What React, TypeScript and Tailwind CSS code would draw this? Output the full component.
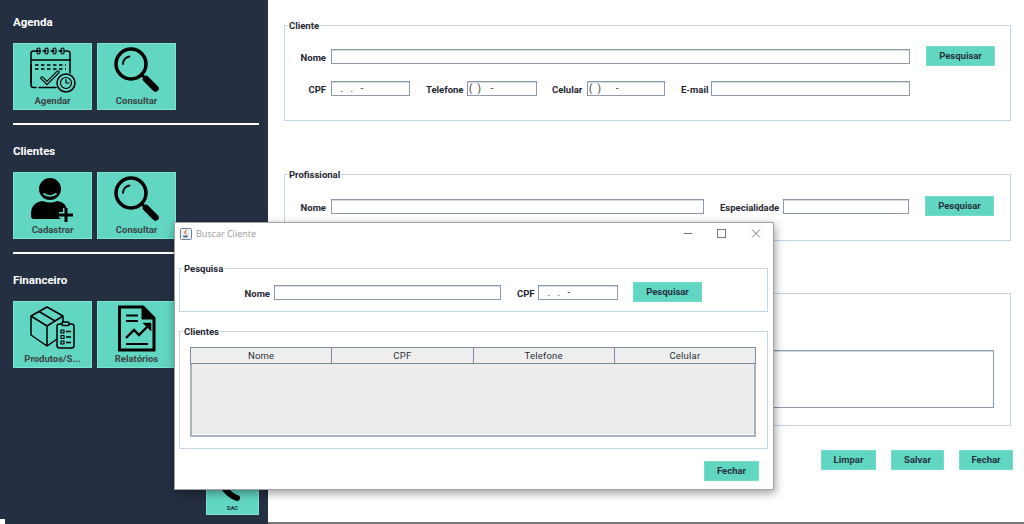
import type { ReactNode } from 'react';

const FONT = "font-['Roboto',Arial,sans-serif]";

function CalendarIcon() {
  return (
    <svg width="46" height="46" viewBox="0 0 46 46" fill="none" stroke="#000" strokeLinecap="round">
      <path d="M10 4H3.5Q1 4 1 6.5V38Q1 40.500 3.500 40.500H6M1 13H40V6.500Q40 4 37.500 4H35" strokeWidth="1.500" />
      <path d="M1 18V36M9 40.500H26M40 13V26" strokeWidth="1.500" />
      <path d="M13 4H16M21 4H24M29 4H32" strokeWidth="1.500" />
      <rect x="7" y="1" width="3" height="6" rx="1.500" strokeWidth="1.200" />
      <rect x="15" y="1" width="3" height="6" rx="1.500" strokeWidth="1.200" />
      <rect x="23" y="1" width="3" height="6" rx="1.500" strokeWidth="1.200" />
      <rect x="31" y="1" width="3" height="6" rx="1.500" strokeWidth="1.200" />
      <path d="M5 18H36M5 22H36" strokeWidth="1.500" strokeDasharray="3.500 2.500" strokeLinecap="butt" />
      <path d="M12 31L17 36L28 25" strokeWidth="3.500" />
      <path d="M12 31L17 36L28 25" strokeWidth="1.200" stroke="#61d6c2" />
      <circle cx="36" cy="36" r="9" fill="#61d6c2" strokeWidth="1.500" />
      <circle cx="36" cy="36" r="5.500" strokeWidth="1.200" />
      <path d="M36 32.500V36H39" strokeWidth="1.200" />
    </svg>
  );
}

function SearchIcon() {
  return (
    <svg width="46" height="46" viewBox="0 0 46 46" fill="none" stroke="#000" strokeLinecap="round">
      <circle cx="17" cy="17" r="15" strokeWidth="3.500" />
      <path d="M9 17Q9.500 10.500 15.500 9.500" strokeWidth="1.800" />
      <path d="M27.500 27.500L31 31" strokeWidth="3" />
      <path d="M32 32L41.500 41.500" strokeWidth="6.500" />
    </svg>
  );
}

function UserPlusIcon() {
  return (
    <svg width="46" height="46" viewBox="0 0 46 46" fill="none">
      <circle cx="20" cy="13" r="11" fill="#000" />
      <path d="M13.500 17.500Q20 22.500 26.500 17.500" stroke="#61d6c2" strokeWidth="1.600" />
      <path d="M1 38C1 30 5 26 13 25Q20 28 27 25C33 26 36 28 37 34L30 43H4Q1 43 1 40Z" fill="#000" />
      <path d="M36 32V46M29 39H43" stroke="#61d6c2" strokeWidth="6" />
      <path d="M36 32V46M29 39H43" stroke="#000" strokeWidth="3" />
    </svg>
  );
}

function BoxIcon() {
  return (
    <svg width="46" height="46" viewBox="0 0 46 46" fill="none" stroke="#000" strokeWidth="1.500" strokeLinejoin="round">
      <path d="M1 11L17 2L33 11V30L17 41L1 30ZM1 11L17 21L33 11M17 21V41M9 6.500L25 16" />
      <rect x="27" y="19" width="17" height="24" rx="2.500" fill="#61d6c2" />
      <rect x="32" y="17" width="7" height="3.500" rx="1" fill="#61d6c2" />
      <path d="M31 25H34V28H31ZM31 30.500H34V33.500H31ZM31 36H34V39H31Z" strokeWidth="1.200" />
      <path d="M36 26.500H41M36 32H41M36 37.500H41" />
    </svg>
  );
}

function ReportIcon() {
  return (
    <svg width="40" height="47" viewBox="0 0 40 47" fill="none" stroke="#000">
      <path d="M2.500 2H26L37 13V45H2.500Z" strokeWidth="3" />
      <path d="M25 2V14H37Z" fill="#000" strokeWidth="1" />
      <path d="M9 10.500H21M9 16H21" strokeWidth="2.200" />
      <path d="M9 33L17 25L22 30L31 21" strokeWidth="2.400" />
      <path d="M26 18H34V26Z" fill="#000" strokeWidth="0.500" />
      <path d="M9 39H31" strokeWidth="2" />
    </svg>
  );
}

function PhoneIcon() {
  return (
    <svg width="40" height="40" viewBox="0 0 40 40" fill="none" stroke="#000" strokeLinecap="round">
      <path d="M4 5C4 18 13 31 24 35" strokeWidth="6" />
    </svg>
  );
}

function JavaIcon() {
  return (
    <svg width="12" height="12" viewBox="0 0 12 12" fill="none">
      <rect x="0.500" y="0.500" width="11" height="11" rx="1" fill="#eef2f7" stroke="#6f8096" />
      <path d="M6.500 2L4.500 4.500L6.500 6" stroke="#d9772f" strokeWidth="1.200" />
      <path d="M3 7.500H8L7.500 9.500H3.500Z" fill="#50678a" />
    </svg>
  );
}

function MenuButton({ label, icon, wide }: { label: string; icon: ReactNode; wide?: boolean }) {
  return (
    <button className={`flex h-[67px] w-[79px] flex-col items-center border border-[#7fe3d2] bg-[#61d6c2] pt-[2px] text-[9.500px] font-bold text-[#3a4545] ${wide ? 'ml-[5px]' : ''}`}>
      <span className="flex h-[48px] items-center justify-center">{icon}</span>
      <span className="mt-[1px] leading-[12px]">{label}</span>
    </button>
  );
}

function MenuSection({ title, children, divider }: { title: string; children: ReactNode; divider?: boolean }) {
  return (
    <section>
      <h2 className="text-[11.500px] font-bold leading-[13px] text-white">{title}</h2>
      <div className="mt-[14px] flex">{children}</div>
      {divider && <div className="mb-[20px] mt-[13px] h-[2px] bg-white" />}
    </section>
  );
}

function Sidebar() {
  return (
    <aside className="relative flex h-full w-[268px] shrink-0 flex-col bg-[#242f42] pb-[9px] pl-[13px] pr-[9px] pt-[16px]">
      <MenuSection title="Agenda" divider>
        <MenuButton label="Agendar" icon={<CalendarIcon />} />
        <MenuButton label="Consultar" icon={<SearchIcon />} wide />
      </MenuSection>
      <MenuSection title="Clientes" divider>
        <MenuButton label="Cadastrar" icon={<UserPlusIcon />} />
        <MenuButton label="Consultar" icon={<SearchIcon />} wide />
      </MenuSection>
      <MenuSection title="Financeiro">
        <MenuButton label="Produtos/S..." icon={<BoxIcon />} />
        <MenuButton label="Relatórios" icon={<ReportIcon />} wide />
      </MenuSection>
      <button className="ml-auto mt-auto flex h-[60px] w-[53px] flex-col items-center border border-[#7fe3d2] bg-[#61d6c2] pt-[7px] text-[6px] font-bold leading-[8px] text-[#26323f]">
        <PhoneIcon />
        <span className="mt-[1px]">SAC</span>
      </button>
      <div className="absolute bottom-0 left-0 h-[5px] w-[5px] bg-white" />
    </aside>
  );
}

function Field({ width, value = '' }: { width: string; value?: string }) {
  return (
    <input
      readOnly
      value={value}
      className={`${width} h-[15px] shrink-0 border border-[#8c9aaa] bg-white px-[1px] text-[10px] leading-[13px] text-[#444] shadow-[inset_0_1px_0_#d5dbe2] outline-none`}
    />
  );
}

function Label({ children, className = '' }: { children: ReactNode; className?: string }) {
  return <label className={`shrink-0 whitespace-nowrap pt-[2px] text-[9.500px] font-bold leading-[13px] text-[#1f2733] ${className}`}>{children}</label>;
}

function ActionButton({ children, className = '' }: { children: ReactNode; className?: string }) {
  return (
    <button className={`h-[20px] shrink-0 border border-[#74dcc9] bg-[#61d6c2] text-[9.500px] font-bold text-[#26323f] ${className}`}>
      {children}
    </button>
  );
}

function Group({ title, className = '', children }: { title?: string; className?: string; children?: ReactNode }) {
  return (
    <fieldset className={`border border-[#c3d5e6] ${className}`}>
      {title && (
        <legend className="ml-[3px] px-[1px] text-[9.500px] font-bold leading-[13px] text-[#1f2733]">{title}</legend>
      )}
      {children}
    </fieldset>
  );
}

function Form() {
  return (
    <main className="flex h-full flex-1 flex-col border-b-2 border-[#777] pl-[16px] pr-[11px] pt-[19px]">
      <Group title="Cliente" className="mr-[2px] h-[102px]">
        <div className="mt-[14px] flex h-[20px] items-center">
          <Label className="w-[41px] text-right">Nome</Label>
          <span className="w-[5px]" />
          <Field width="w-[579px]" />
          <ActionButton className="ml-[16px] w-[69px]">Pesquisar</ActionButton>
        </div>
        <div className="mt-[15px] flex h-[15px] items-center">
          <Label className="w-[41px] text-right">CPF</Label>
          <span className="w-[5px]" />
          <Field width="w-[79px]" value="   .   .   -" />
          <Label className="ml-[16px] w-[37px]">Telefone</Label>
          <span className="w-[4px]" />
          <Field width="w-[70px]" value="(  )    -" />
          <Label className="ml-[15px] w-[31px]">Celular</Label>
          <span className="w-[4px]" />
          <Field width="w-[78px]" value="(  )      -" />
          <Label className="ml-[16px] w-[27px]">E-mail</Label>
          <span className="w-[3px]" />
          <Field width="w-[199px]" />
        </div>
      </Group>

      <Group title="Profissional" className="mr-[2px] mt-[47px] h-[73px]">
        <div className="mt-[15px] flex h-[20px] items-center">
          <Label className="w-[41px] text-right">Nome</Label>
          <span className="w-[5px]" />
          <Field width="w-[373px]" />
          <Label className="ml-[16px] w-[60px]">Especialidade</Label>
          <span className="w-[3px]" />
          <Field width="w-[126px]" />
          <ActionButton className="ml-[16px] w-[69px]">Pesquisar</ActionButton>
        </div>
      </Group>

      <Group className="mr-[2px] mt-[52px] h-[133px]">
        <div className="ml-[15px] mr-[16px] mt-[56px] h-[58px] border border-[#8c9aaa] shadow-[inset_0_1px_0_#d5dbe2]" />
      </Group>

      <div className="mt-[24px] flex justify-end gap-[15px]">
        <ActionButton className="w-[55px]">Limpar</ActionButton>
        <ActionButton className="w-[53px]">Salvar</ActionButton>
        <ActionButton className="w-[54px]">Fechar</ActionButton>
      </div>
    </main>
  );
}

function HeaderCell({ children }: { children: ReactNode }) {
  return (
    <div className="flex-1 border-b border-r border-t border-[#7f8c9c] bg-[#eeeeee] text-center text-[9.500px] leading-[16px] tracking-[0.2px] text-[#2a3038]">
      {children}
    </div>
  );
}

function SearchWindow() {
  return (
    <div className="absolute left-[174px] top-[222px] flex h-[268px] w-[600px] flex-col border border-[#a3a3a3] bg-white shadow-[1px_3px_9px_rgba(0,0,0,0.4)]">
      <div className="flex h-[22px] shrink-0 items-center pl-[5px] pr-[12px]">
        <JavaIcon />
        <span className="ml-[4px] font-['Open_Sans',sans-serif] text-[9px] text-[#9b9b9b]">Buscar Cliente</span>
        <svg className="ml-auto" width="78" height="12" viewBox="0 0 78 12" fill="none" stroke="#777">
          <path d="M1 5.500H9" />
          <rect x="34.500" y="1.500" width="8" height="8" />
          <path d="M69 1.500L77 9.500M77 1.500L69 9.500" />
        </svg>
      </div>
      <div className="flex-1 px-[4px] pt-[17px]">
        <Group title="Pesquisa" className="mr-[1px] h-[50px]">
          <div className="mt-[7px] flex h-[20px] items-center">
            <Label className="ml-[60px] w-[30px] text-right">Nome</Label>
            <span className="w-[4px]" />
            <Field width="w-[227px]" />
            <Label className="ml-[16px] w-[18px]">CPF</Label>
            <span className="w-[3px]" />
            <Field width="w-[80px]" value="   .   .   -" />
            <ActionButton className="ml-[15px] w-[69px]">Pesquisar</ActionButton>
          </div>
        </Group>
        <Group title="Clientes" className="mr-[1px] mt-[13px] h-[124px]">
          <div className="ml-[10px] mr-[11px] mt-[9px] flex h-[90px] flex-col border-b-2 border-l-2 border-r-2 border-[#aab4bf] bg-[#ededed] shadow-[inset_0_-1px_0_#fff]">
            <div className="-mx-[2px] flex h-[17px] border-l border-[#7f8c9c]">
              <HeaderCell>Nome</HeaderCell>
              <HeaderCell>CPF</HeaderCell>
              <HeaderCell>Telefone</HeaderCell>
              <HeaderCell>Celular</HeaderCell>
            </div>
          </div>
        </Group>
        <div className="mt-[12px] flex justify-end pr-[10px]">
          <ActionButton className="w-[55px]">Fechar</ActionButton>
        </div>
      </div>
    </div>
  );
}

export default function App() {
  return (
    <div className={`relative flex h-[524px] w-[1024px] overflow-hidden bg-white ${FONT}`}>
      <Sidebar />
      <Form />
      <SearchWindow />
    </div>
  );
}
